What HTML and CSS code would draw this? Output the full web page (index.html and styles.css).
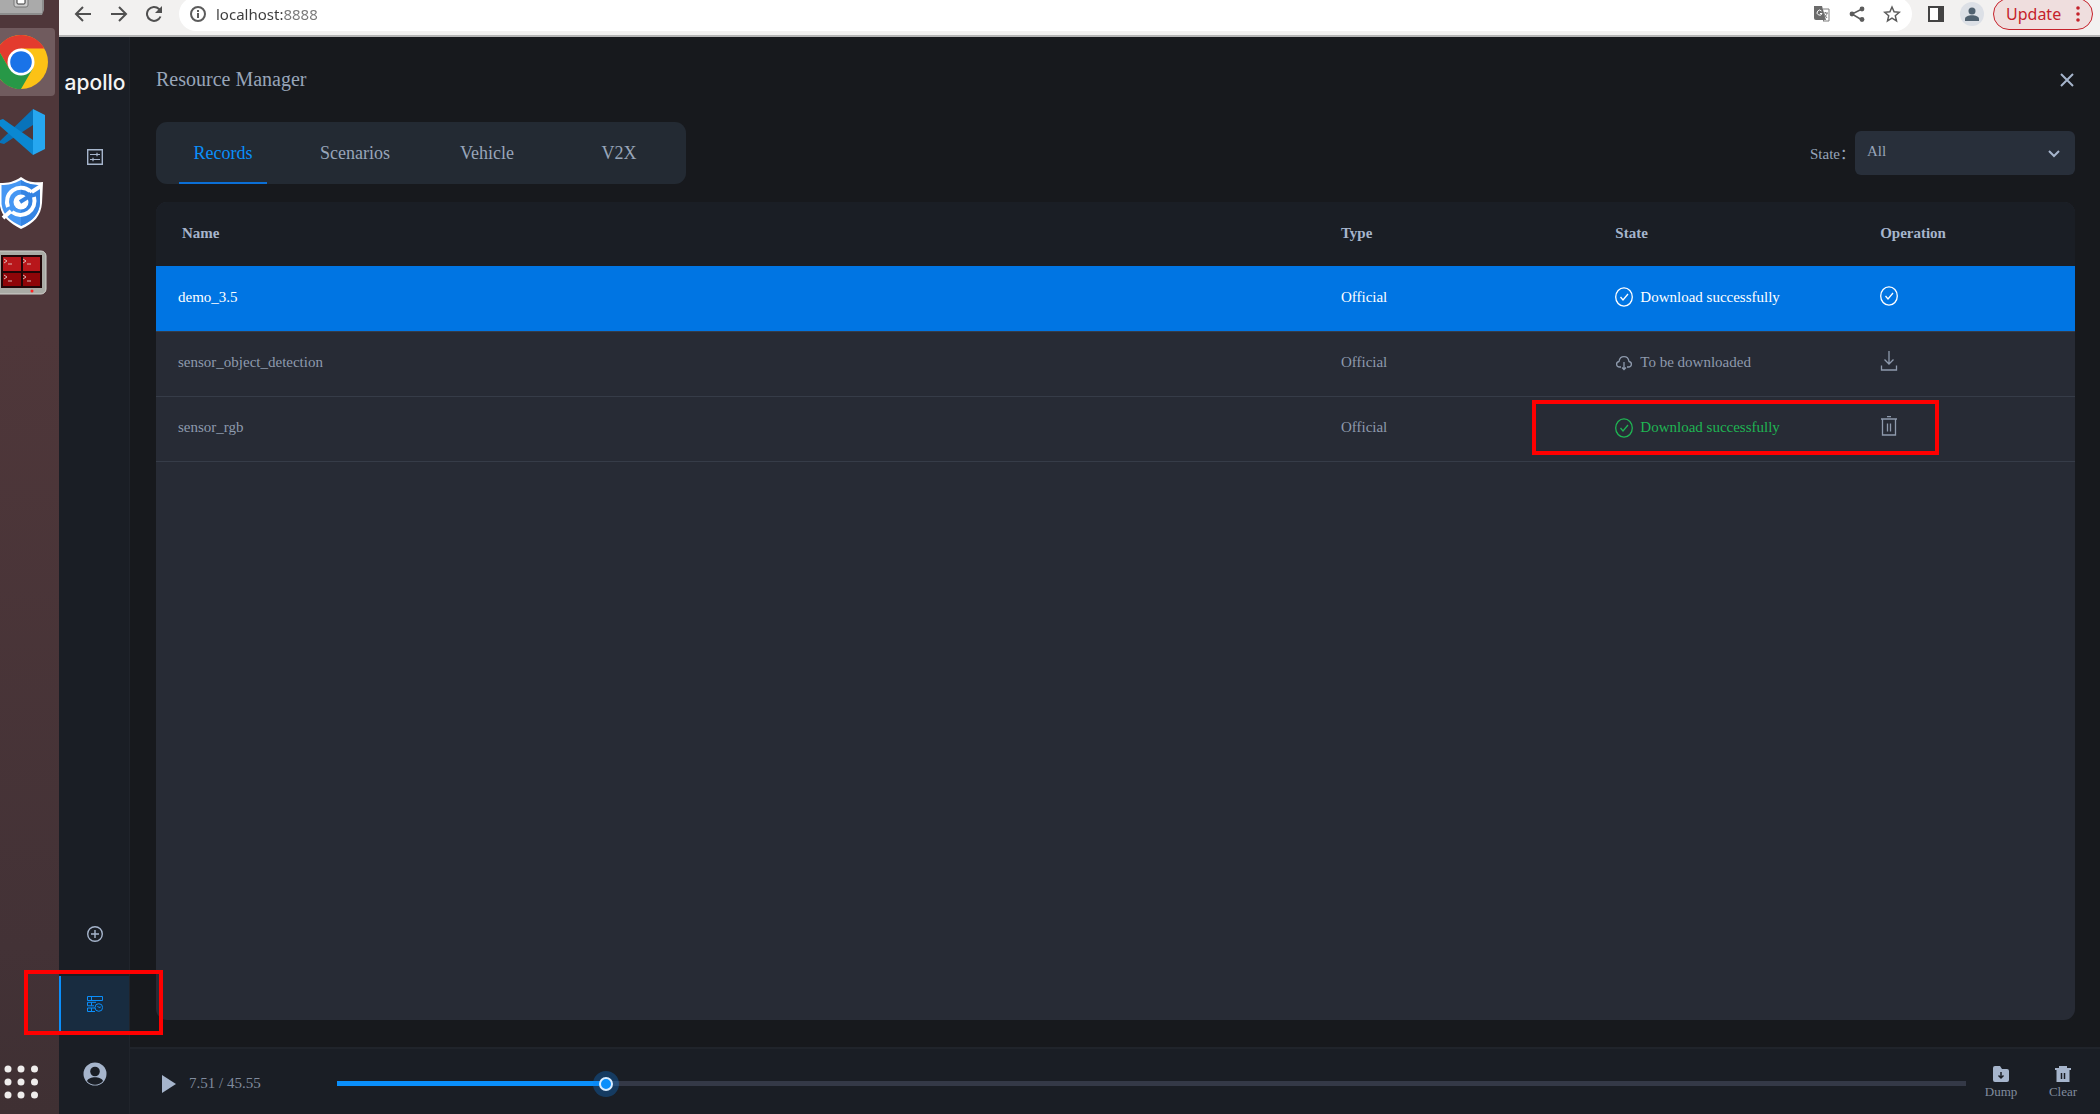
FILE: index.html
```html
<!DOCTYPE html>
<html lang="en">
<head>
    <meta charset="UTF-8">
    <title>Resource Manager</title>
    <link rel="stylesheet" href="styles.css">
</head>
<body>
    <!-- Desktop dock -->
    <nav class="dock" aria-label="Dock">
        <button class="dock-item dock-disk" aria-label="Disk">
            <svg width="59" height="27" viewBox="0 0 59 27">
                <path d="M0 0h44v10l-2 5H0z" fill="#8d8d8d"/>
                <path d="M0 0h42v13H0z" fill="#aaa"/>
                <rect x="14" y="-6" width="14" height="13" rx="2" fill="#ccc" stroke="#777"/>
                <rect x="17" y="-4" width="8" height="8" rx="1" fill="#fff" stroke="#333"/>
            </svg>
        </button>
        <button class="dock-item active" aria-label="Chrome">
            <svg width="55" height="68" viewBox="0 0 55 68">
                <circle cx="21" cy="34" r="27" fill="#fcc216"/>
                <path d="M-2.400 20.500A27 27 0 0 1 44.400 20.500H21L9.300 40.800z" fill="#e33b2e"/>
                <path d="M-2.400 20.500A27 27 0 0 0 21 61L32.700 40.800L21 34L9.300 40.800z" fill="#279847"/>
                <circle cx="21" cy="34" r="13.500" fill="#fff"/>
                <circle cx="21" cy="34" r="10.800" fill="#1a73e8"/>
            </svg>
        </button>
        <button class="dock-item" aria-label="Code editor">
            <svg width="55" height="68" viewBox="0 0 55 68">
                <path d="M0 43L33 11V27L4 46L0 45z" fill="#0873ba"/>
                <path d="M0 22L3 21L33 42V57L0 28z" fill="#0a88d2"/>
                <path d="M33 11L45 17V51L33 57z" fill="#26a7f0"/>
            </svg>
        </button>
        <button class="dock-item" aria-label="Security">
            <svg width="55" height="68" viewBox="0 0 55 68">
                <path d="M21 9C14 14 8 15 0 15V38C2 49 10 55 21 61C34 55 41 48 42 35L43 14C34 15 28 14 21 9z" fill="#fff"/>
                <path d="M21 12C14 16 8 17 1.500 17V36C3 47 10 53 21 58C33 53 39 46 40 35V17C33 17 27 16 21 12z" fill="#4697f3"/>
                <path d="M21 12C27 16 33 17 40 17V35C39 46 33 53 21 58z" fill="#3484e3"/>
                <path d="M30 23A14 14 0 0 0 8 39M12 44A14 14 0 0 0 34 29M41 18L30 25M3 50L11 43" fill="none" stroke="#fff" stroke-width="4"/>
                <circle cx="21" cy="34" r="7.500" fill="#fff"/>
                <path d="M20 34L33 26" stroke="#3484e3" stroke-width="4"/>
            </svg>
        </button>
        <button class="dock-item" aria-label="Terminator">
            <svg width="55" height="68" viewBox="0 0 55 68">
                <rect x="-5" y="13" width="51" height="43" rx="5" fill="#a9aba5" stroke="#d0d1cc"/>
                <rect x="1" y="17" width="41" height="33" fill="#200708"/>
                <path d="M3 19h18v14H3zM23 19h17v14H23z" fill="#b8171b"/>
                <path d="M3 35h18v13H3zM23 35h17v13H23z" fill="#8e0508"/>
                <path d="M4 21l3 2l-3 2M8 26h4M23 21l3 2l-3 2M27 26h4M4 37l3 2l-3 2M8 43h4M23 37l3 2l-3 2M27 43h4" fill="none" stroke="#ddb8b4"/>
                <circle cx="32" cy="53" r="1.500" fill="#f22"/>
            </svg>
        </button>
        <button class="dock-apps" aria-label="Show applications">
            <svg width="59" height="40" viewBox="0 0 59 40" fill="#efedec">
                <circle cx="8" cy="6" r="3.500"/><circle cx="21" cy="6" r="3.500"/><circle cx="34.500" cy="6" r="3.500"/>
                <circle cx="8" cy="19" r="3.500"/><circle cx="21" cy="19" r="3.500"/><circle cx="34.500" cy="19" r="3.500"/>
                <circle cx="8" cy="32" r="3.500"/><circle cx="21" cy="32" r="3.500"/><circle cx="34.500" cy="32" r="3.500"/>
            </svg>
        </button>
    </nav>

    <div class="window">
        <!-- Browser toolbar -->
        <header class="toolbar">
            <div class="toolbar-nav">
                <button aria-label="Back">
                    <svg width="18" height="18" viewBox="0 0 18 18"><path d="M17 9H2M9 2L2 9l7 7" /></svg>
                </button>
                <button aria-label="Forward">
                    <svg width="18" height="18" viewBox="0 0 18 18"><path d="M1 9h15M9 2l7 7l-7 7" /></svg>
                </button>
                <button aria-label="Reload">
                    <svg width="18" height="18" viewBox="0 0 18 18"><path d="M14.500 11.500A7 7 0 1 1 13 4L14.500 6" /><path d="M16 1v7H9z" fill="#505050" stroke="none"/></svg>
                </button>
            </div>
            <div class="address">
                <svg width="18" height="18" viewBox="0 0 18 18" fill="none" stroke="#5c5c5c" stroke-width="2"><circle cx="9" cy="9" r="7"/><path d="M9 8v5M9 5v2"/></svg>
                <input class="address-input" type="text" value="localhost:8888" aria-label="Address">
                <button aria-label="Translate">
                    <svg width="18" height="18" viewBox="0 0 18 18">
                        <path d="M1 1h8l4 14H3a2 2 0 0 1-2-2z" fill="#6b6b6b"/>
                        <path d="M10 4h6v12h-6l2-2M10 8h5M12.500 7v1M14 8c0 2-2 4-3 4M11 9l3 4" fill="none" stroke="#7d7d7d"/>
                        <path d="M8.500 6A2.500 2.500 0 1 0 9 8.500H7" fill="none" stroke="#fff"/>
                    </svg>
                </button>
                <button aria-label="Share">
                    <svg width="18" height="18" viewBox="0 0 18 18" fill="#5c5c5c"><path d="M14 4L4 9l10 6" fill="none" stroke="#5c5c5c" stroke-width="1.500"/><circle cx="14" cy="4" r="2.400"/><circle cx="4" cy="9" r="2.400"/><circle cx="14" cy="14.500" r="2.400"/></svg>
                </button>
                <button aria-label="Bookmark">
                    <svg width="18" height="18" viewBox="0 0 18 18" fill="none" stroke="#5c5c5c" stroke-width="1.500"><path d="M9 2l2.100 4.800l5.200.5l-4 3.500l1.200 5.100L9 13.200l-4.500 2.700l1.200-5.100l-4-3.500l5.200-.5z"/></svg>
                </button>
            </div>
            <button class="side-panel" aria-label="Side panel">
                <svg width="18" height="18" viewBox="0 0 18 18"><path d="M2 2h14v14H2z" fill="#fff" stroke="#434343" stroke-width="2"/><path d="M11 2h5v14h-5z" fill="#434343"/></svg>
            </button>
            <button class="avatar" aria-label="Profile">
                <svg width="24" height="24" viewBox="0 0 24 24"><circle cx="12" cy="12" r="12" fill="#dce0e6"/><g fill="#50616f"><circle cx="12" cy="9" r="3.500"/><path d="M5 19v-2c0-5 14-5 14 0v2z"/></g></svg>
            </button>
            <button class="update">
                Update
                <svg width="4" height="16" viewBox="0 0 4 16" fill="#c5222b"><circle cx="2" cy="2" r="1.800"/><circle cx="2" cy="8" r="1.800"/><circle cx="2" cy="14" r="1.800"/></svg>
            </button>
        </header>

        <div class="app">
            <aside class="sidebar">
                <div class="logo">apollo</div>
                <button class="side-item" aria-label="Mode settings">
                    <svg width="16" height="16" viewBox="0 0 16 16"><path d="M.7.700h14.600v14.600H.7z"/><path d="M3 5.500h10M10 3.800v3.400M3 10.500h10M6 8.800v3.400" stroke-width="1.200"/></svg>
                </button>
                <div class="side-bottom">
                    <button class="side-item" aria-label="Add panel">
                        <svg width="16" height="16" viewBox="0 0 16 16"><circle cx="8" cy="8" r="7.300"/><path d="M8 4v8M4 8h8"/></svg>
                    </button>
                    <button class="side-item active" aria-label="Resource manager">
                        <svg width="16" height="16" viewBox="0 0 16 16"><path d="M.5.500h15v4H.5zM4.500.500v4M9 6.300H.5v3.500H7M4.500 6.300v3.500M8 12H.5v3.500h7.500M4.500 12v3.500"/><circle cx="11.800" cy="11.500" r="3.800"/><path d="M10.500 10l1.300 1.500l2-.5"/></svg>
                    </button>
                    <button class="side-item" aria-label="Account">
                        <svg width="24" height="24" viewBox="0 0 24 24"><circle cx="12" cy="12" r="11.500" fill="#a6b5cc" stroke="none"/><circle cx="12" cy="9.500" r="4.800" fill="#1a1e25" stroke="none"/><path d="M4 19c2-5 14-5 16 0c-4 5-12 5-16 0z" fill="#1a1e25" stroke="none"/></svg>
                    </button>
                </div>
            </aside>

            <div class="main">
                <section class="content">
                    <div class="page-head">
                        <h1>Resource Manager</h1>
                        <button class="close" aria-label="Close">
                            <svg width="14" height="14" viewBox="0 0 14 14"><path d="M1 1l12 12M13 1L1 13"/></svg>
                        </button>
                    </div>

                    <div class="filters">
                        <div class="tabs" role="tablist">
                            <button class="tab active" role="tab" aria-selected="true">Records</button>
                            <button class="tab" role="tab">Scenarios</button>
                            <button class="tab" role="tab">Vehicle</button>
                            <button class="tab" role="tab">V2X</button>
                        </div>
                        <div class="state-filter">
                            <label for="state">State：</label>
                            <div class="select">
                                <select id="state">
                                    <option>All</option>
                                </select>
                                <svg width="12" height="8" viewBox="0 0 12 8"><path d="M1 1l5 5l5-5"/></svg>
                            </div>
                        </div>
                    </div>

                    <div class="panel">
                        <table>
                            <thead>
                                <tr>
                                    <th class="col-name">Name</th>
                                    <th class="col-type">Type</th>
                                    <th class="col-state">State</th>
                                    <th class="col-operation">Operation</th>
                                </tr>
                            </thead>
                            <tbody>
                                <tr class="selected">
                                    <td>demo_3.5</td>
                                    <td>Official</td>
                                    <td>
                                        <div class="state">
                                            <svg width="18" height="20" viewBox="0 0 18 20"><ellipse cx="9" cy="10" rx="8.300" ry="9.200"/><path d="M5.500 10l2.500 3l5-6"/></svg>
                                            Download successfully
                                        </div>
                                    </td>
                                    <td>
                                        <button class="op" aria-label="In use">
                                            <svg width="18" height="20" viewBox="0 0 18 20"><ellipse cx="9" cy="10" rx="8.300" ry="9.200"/><path d="M5.500 10l2.500 3l5-6"/></svg>
                                        </button>
                                    </td>
                                </tr>
                                <tr>
                                    <td>sensor_object_detection</td>
                                    <td>Official</td>
                                    <td>
                                        <div class="state">
                                            <svg width="18" height="20" viewBox="0 0 18 20"><path d="M6 14H4.500C1 14 .5 9 4 8.500C5 2 13 2 14 8.500C17.500 9 17 14 13.500 14H12M9 9v8M7 14.500l2 2l2-2"/></svg>
                                            To be downloaded
                                        </div>
                                    </td>
                                    <td>
                                        <button class="op" aria-label="Download">
                                            <svg width="18" height="20" viewBox="0 0 18 20"><path d="M9 0v13M4.500 8.500L9 13l4.500-4.500M1.500 14.500v4.500h15v-4.500"/></svg>
                                        </button>
                                    </td>
                                </tr>
                                <tr>
                                    <td>sensor_rgb</td>
                                    <td>Official</td>
                                    <td>
                                        <div class="state success">
                                            <svg width="18" height="20" viewBox="0 0 18 20"><ellipse cx="9" cy="10" rx="8.300" ry="9.200"/><path d="M5.500 10l2.500 3l5-6"/></svg>
                                            Download successfully
                                        </div>
                                    </td>
                                    <td>
                                        <button class="op" aria-label="Delete">
                                            <svg width="18" height="20" viewBox="0 0 18 20"><path d="M1 3h16M7 .700h4M2.500 3v16h13V3M7.500 7.500v8M10.500 7.500v8"/></svg>
                                        </button>
                                    </td>
                                </tr>
                            </tbody>
                        </table>
                    </div>
                </section>

                <footer class="player">
                    <button class="play" aria-label="Play">
                        <svg width="16" height="18" viewBox="0 0 16 18"><path d="M1 0l14 9l-14 9z" fill="#a6b5cc"/></svg>
                    </button>
                    <span class="time">7.51 / 45.55</span>
                    <div class="progress" style="--played: 16.5%">
                        <input type="range" min="0" max="45.55" step="0.01" value="7.51" aria-label="Playback position">
                    </div>
                    <button class="player-action">
                        <svg width="16" height="16" viewBox="0 0 16 16"><path d="M2 0h5l2 3h5a2 2 0 0 1 2 2v9a2 2 0 0 1-2 2H2a2 2 0 0 1-2-2V2a2 2 0 0 1 2-2z" fill="#a6b5cc"/><path d="M8 6v6M5.500 9.500L8 12l2.500-2.500" fill="none" stroke="#1a1e25" stroke-width="1.500"/></svg>
                        Dump
                    </button>
                    <button class="player-action">
                        <svg width="16" height="16" viewBox="0 0 16 16"><path d="M0 2h4V0h8v2h4v2h-1.500v12h-13V4H0z" fill="#a6b5cc"/><path d="M6.500 7v6M9.500 7v6" stroke="#1a1e25" stroke-width="1.500"/></svg>
                        Clear
                    </button>
                </footer>
            </div>
        </div>
    </div>

    <!-- Callout frames -->
    <div class="callout callout-menu"></div>
    <div class="callout callout-row"></div>
</body>
</html>
```

FILE: styles.css
```css
* {
    box-sizing: border-box;
}

body {
    display: flex;
    height: 100vh;
    margin: 0;
    position: relative;
    overflow: hidden;
    background: #17191d;
    color: #808b9d;
    font-family: "Liberation Serif", "Noto Sans CJK SC", serif;
    font-size: 15px;
}

button {
    padding: 0;
    border: none;
    background: none;
    color: inherit;
    font: inherit;
    cursor: pointer;
}

svg {
    display: block;
    flex: none;
}

/* Dock */
.dock {
    display: flex;
    flex-direction: column;
    gap: 2px;
    width: 59px;
    background: linear-gradient(#4f373a, #4f373a 30%, #433236 85%, #3f3033);
}

.dock-item {
    width: 55px;
    height: 68px;
    border-radius: 0 4px 4px 0;
}

.dock-item.active {
    background: #705b5e;
}

.dock-item.dock-disk {
    height: 26px;
}

.dock-apps {
    margin-top: auto;
    margin-bottom: 11px;
}

/* Browser */
.window {
    flex: 1;
    display: flex;
    flex-direction: column;
    min-width: 0;
}

.toolbar {
    display: flex;
    align-items: center;
    height: 37px;
    padding: 0 7px 8px 15px;
    background: #f2f1f0;
    border-bottom: 2px solid #b5b5b5;
    font-family: "Noto Sans", sans-serif;
}

.toolbar-nav {
    display: flex;
    gap: 18px;
    margin-right: 15px;
}

.toolbar-nav svg {
    fill: none;
    stroke: #505050;
    stroke-width: 2;
}

.address {
    flex: 1;
    display: flex;
    align-items: center;
    gap: 17px;
    height: 34px;
    padding: 0 11px 0 10px;
    border-radius: 17px;
    background: #fff;
}

.address-input {
    flex: 1;
    margin-left: -8px;
    padding: 0;
    border: none;
    outline: none;
    background: linear-gradient(90deg, #3c3c3c 67px, #777 67px);
    background-clip: text;
    color: transparent;
    font-family: inherit;
    font-size: 15px;
}

.side-panel {
    margin-left: 15px;
}

.avatar {
    margin-left: 15px;
}

.update {
    display: flex;
    align-items: center;
    justify-content: space-between;
    width: 100px;
    height: 32px;
    margin-left: 9px;
    padding: 0 12px;
    border: 1px solid #c5222b;
    border-radius: 16px;
    background: #efdede;
    color: #c5222b;
    font-size: 16px;
}

.app {
    flex: 1;
    display: flex;
    min-height: 0;
}

/* Sidebar */
.sidebar {
    display: flex;
    flex-direction: column;
    width: 71px;
    padding-bottom: 12px;
    background: #1a1e25;
    border-right: 1px solid #20242b;
}

.logo {
    height: 92px;
    padding-left: 2px;
    line-height: 92px;
    color: #f4f4f4;
    font-family: Inter, sans-serif;
    font-size: 21px;
    font-weight: 500;
    text-align: center;
}

.side-item {
    display: flex;
    align-items: center;
    justify-content: center;
    width: 70px;
    height: 56px;
    border-left: 2px solid transparent;
}

.side-item svg {
    fill: none;
    stroke: #a6b5cc;
    stroke-width: 1.4px;
}

.side-item.active {
    background: #182c40;
    border-left-color: #0a8ffb;
}

.side-item.active svg {
    stroke: #0a8ffb;
    stroke-width: 1px;
}

.side-bottom {
    display: flex;
    flex-direction: column;
    gap: 14px;
    margin-top: auto;
}

/* Main area */
.main {
    flex: 1;
    display: flex;
    flex-direction: column;
    min-width: 0;
}

.content {
    flex: 1;
    display: flex;
    flex-direction: column;
    padding: 0 25px 27px 26px;
}

.page-head {
    display: flex;
    align-items: center;
    justify-content: space-between;
    height: 85px;
}

.page-head h1 {
    margin: 0;
    color: #98a5b9;
    font-size: 20px;
    font-weight: normal;
}

.close {
    margin-right: 1px;
}

.close svg,
.select svg {
    fill: none;
    stroke: #a6b5cc;
    stroke-width: 2;
}

.filters {
    display: flex;
    align-items: center;
    justify-content: space-between;
    margin-bottom: 18px;
}

.tabs {
    display: flex;
    gap: 44px;
    padding: 0 23px;
    border-radius: 11px;
    background: #232a33;
}

.tab {
    width: 88px;
    height: 62px;
    padding-top: 2px;
    border-bottom: 2px solid transparent;
    color: #98a5b9;
    font-size: 18px;
}

.tab.active {
    border-bottom-color: #0b6fd6;
    color: #0a8ffb;
}

.state-filter {
    display: flex;
    align-items: center;
    color: #98a5b9;
}

.state-filter label {
    padding-bottom: 2px;
}

.select {
    position: relative;
    width: 220px;
}

.select select {
    display: block;
    width: 100%;
    height: 44px;
    padding: 0 12px 4px;
    border: none;
    border-radius: 6px;
    appearance: none;
    background: #282f3a;
    color: #98a5b9;
    font: inherit;
}

.select svg {
    position: absolute;
    top: 19px;
    right: 15px;
    pointer-events: none;
}

/* Table */
.panel {
    flex: 1;
    overflow: hidden;
    border-radius: 11px;
    background: #272b35;
}

table {
    width: 100%;
    border-collapse: collapse;
    table-layout: fixed;
}

th,
td {
    height: 65px;
    padding: 0 22px 2px;
    border-bottom: 1px solid #363c48;
    text-align: left;
}

th {
    height: 64px;
    border-bottom: none;
    background: #1a1e25;
    color: #a6b5cc;
}

.col-name {
    width: 60.6%;
    padding-left: 26px;
}

.col-type {
    width: 14.3%;
}

.col-state {
    width: 13.8%;
}

td {
    color: #8e9aad;
}

.selected td {
    background: #0075e3;
    color: #fff;
}

.state {
    display: flex;
    align-items: center;
    gap: 7px;
}

.state.success {
    color: #1fb553;
}

.state svg,
.op svg {
    fill: none;
    stroke: currentColor;
    stroke-width: 1.3px;
}

.op {
    display: block;
    margin-bottom: 3px;
}

/* Player */
.player {
    display: flex;
    align-items: center;
    height: 67px;
    padding: 0 20px 0 31px;
    background: #1a1e25;
    border-top: 2px solid #20242b;
}

.play {
    padding-top: 5px;
}

.time {
    width: 148px;
    padding-top: 4px;
    margin-left: 12px;
}

.progress {
    flex: 1;
    height: 5px;
    margin: 4px 18px 0 0;
    background: linear-gradient(90deg, #0a8ffb var(--played), #343947 var(--played));
}

.progress input {
    display: block;
    width: calc(100% + 14px);
    height: 5px;
    margin: 0 -7px;
    appearance: none;
    background: none;
}

.progress input::-webkit-slider-thumb {
    appearance: none;
    width: 14px;
    height: 14px;
    border: 2px solid #d8ecff;
    border-radius: 50%;
    background: #0a8ffb;
    box-shadow: 0 0 0 6px rgba(10, 130, 240, 0.3);
}

.player-action {
    display: flex;
    flex-direction: column;
    align-items: center;
    gap: 2px;
    width: 34px;
    margin-left: 28px;
    padding-top: 3px;
    font-size: 13px;
}

.progress + .player-action {
    margin-left: 0;
}

/* Callouts */
.callout {
    position: absolute;
    border: 4px solid #f00;
    pointer-events: none;
}

.callout-menu {
    left: 24px;
    bottom: 79px;
    width: 139px;
    height: 65px;
}

.callout-row {
    top: 400px;
    right: 161px;
    width: 407px;
    height: 55px;
}
```
